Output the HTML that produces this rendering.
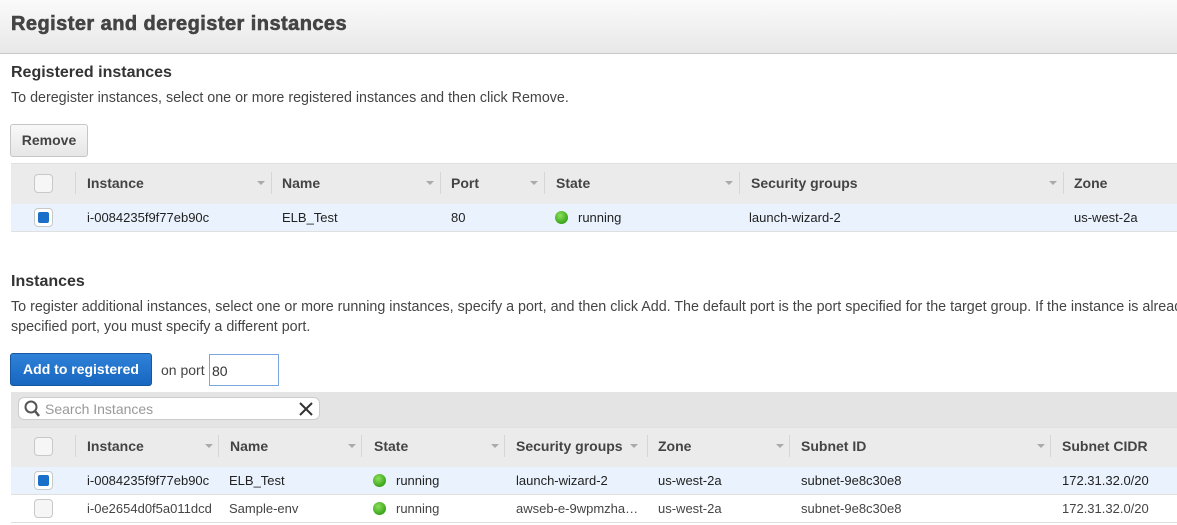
<!DOCTYPE html>
<html><head><style>
body{margin:0;width:1177px;height:525px;overflow:hidden;background:#fff;font-family:"Liberation Sans",Arial,sans-serif;color:#333;position:relative}
.a{position:absolute;white-space:nowrap}
.title{left:0;top:0;width:1177px;height:53px;background:linear-gradient(#fafafa,#e8e8e8);border-bottom:1px solid #c8c8c8}
h3{margin:0;font-size:16px;font-weight:bold;color:#333}
.d{font-size:14.3px;color:#444}
.hdr{background:#ebebeb;border-top:1px solid #e0e0e0;border-bottom:1px solid #d0d0d0}
.row{border-bottom:1px solid #e0e0e0}
.sel{background:#eaf3fd}
.th{font-size:14px;font-weight:bold;color:#444}
.td{font-size:13px;color:#222}
.div{width:1px;height:22px;background:#d6d6d6}
.ar{width:0;height:0;border-left:4px solid transparent;border-right:4px solid transparent;border-top:4px solid #aaa}
.cb{width:17px;height:17px;border:1px solid #c8c8c8;border-radius:4px;background:#f6f6f6}
.cbs{width:17px;height:17px;border:1px solid #c8c8c8;border-radius:4px;background:#fff}
.cbs::after{content:"";position:absolute;left:3px;top:3px;width:11px;height:11px;background:#1a6fc9;border-radius:2px}
.dot{width:13px;height:13px;border-radius:50%;background:radial-gradient(circle at 40% 35%,#8de05a,#3aa51c 70%,#2a8a12)}
</style></head><body>
<div class="a title"></div>
<div class="a" style="left:11px;top:13px;font-size:20px;color:#444;letter-spacing:0.45px"><b style="font-weight:bold;-webkit-text-stroke:0.6px #444">Register and deregister instances</b></div>
<div class="a" style="left:11px;top:64px"><h3>Registered instances</h3></div>
<div class="a d" style="left:11px;top:90px">To deregister instances, select one or more registered instances and then click Remove.</div>
<div class="a" style="left:10px;top:124px;width:76px;height:31px;border:1px solid #c6c6c6;border-radius:3px;background:linear-gradient(#f8f8f8,#e6e6e6);font-size:14px;font-weight:bold;color:#444;text-align:center;line-height:31px">Remove</div>

<div class="a hdr" style="left:11px;top:163px;width:1166px;height:40px"></div>
<div class="a cb" style="left:34px;top:174px"></div>
<div class="a div" style="left:75px;top:172px"></div><div class="a th" style="left:87px;top:175px">Instance</div><div class="a ar" style="left:257px;top:181px"></div>
<div class="a div" style="left:271px;top:172px"></div><div class="a th" style="left:282px;top:175px">Name</div><div class="a ar" style="left:426px;top:181px"></div>
<div class="a div" style="left:440px;top:172px"></div><div class="a th" style="left:451px;top:175px">Port</div><div class="a ar" style="left:530px;top:181px"></div>
<div class="a div" style="left:544px;top:172px"></div><div class="a th" style="left:556px;top:175px">State</div><div class="a ar" style="left:725px;top:181px"></div>
<div class="a div" style="left:739px;top:172px"></div><div class="a th" style="left:751px;top:175px">Security groups</div><div class="a ar" style="left:1049px;top:181px"></div>
<div class="a div" style="left:1063px;top:172px"></div><div class="a th" style="left:1074px;top:175px">Zone</div>
<div class="a row sel" style="left:11px;top:204px;width:1166px;height:27px"></div>
<div class="a cbs" style="left:34px;top:208px"></div>
<div class="a td" style="left:87px;top:210px">i-0084235f9f77eb90c</div>
<div class="a td" style="left:282px;top:210px">ELB_Test</div>
<div class="a td" style="left:451px;top:210px">80</div>
<div class="a dot" style="left:555px;top:211px"></div><div class="a td" style="left:578px;top:210px">running</div>
<div class="a td" style="left:749px;top:210px">launch-wizard-2</div>
<div class="a td" style="left:1074px;top:210px">us-west-2a</div>

<div class="a" style="left:11px;top:273px"><h3>Instances</h3></div>
<div class="a d" style="left:11px;top:299px;width:1166px;overflow:hidden">To register additional instances, select one or more running instances, specify a port, and then click Add. The default port is the port specified for the target group. If the instance is already registered on the</div>
<div class="a d" style="left:11px;top:319px">specified port, you must specify a different port.</div>
<div class="a" style="left:10px;top:353px;width:142px;height:33px;border-radius:3px;background:linear-gradient(#2f82d8,#1766c0);border:1px solid #15589f;box-sizing:border-box;color:#fff;font-size:14px;font-weight:bold;text-align:center;line-height:31px">Add to registered</div>
<div class="a" style="left:161px;top:362px;font-size:14px;color:#444">on port</div>
<div class="a" style="left:209px;top:354px;width:70px;height:32px;border:1px solid #7aa7e0;box-sizing:border-box;font-size:14px;padding:8px 0 0 2px;color:#333">80</div>

<div class="a" style="left:11px;top:392px;width:1166px;height:35px;background:#e4e4e4"></div>
<div class="a" style="left:18px;top:397px;width:302px;height:23px;background:#fff;border:1px solid #ccc;border-radius:6px;box-sizing:border-box"></div>
<svg class="a" style="left:23px;top:400px" width="20" height="18"><circle cx="8" cy="7" r="5.5" fill="none" stroke="#555" stroke-width="2"/><line x1="12" y1="11" x2="16" y2="16" stroke="#555" stroke-width="2.5"/></svg>
<div class="a" style="left:45px;top:401px;font-size:14px;color:#999">Search Instances</div>
<svg class="a" style="left:299px;top:402px" width="14" height="14"><path d="M1 1L13 13M13 1L1 13" stroke="#333" stroke-width="2"/></svg>

<div class="a hdr" style="left:11px;top:427px;width:1166px;height:39px"></div>
<div class="a cb" style="left:34px;top:437px"></div>
<div class="a div" style="left:75px;top:435px"></div><div class="a th" style="left:87px;top:438px">Instance</div><div class="a ar" style="left:205px;top:444px"></div>
<div class="a div" style="left:218px;top:435px"></div><div class="a th" style="left:230px;top:438px">Name</div><div class="a ar" style="left:348px;top:444px"></div>
<div class="a div" style="left:361px;top:435px"></div><div class="a th" style="left:374px;top:438px">State</div><div class="a ar" style="left:491px;top:444px"></div>
<div class="a div" style="left:504px;top:435px"></div><div class="a th" style="left:516px;top:438px">Security groups</div><div class="a ar" style="left:630px;top:444px"></div>
<div class="a div" style="left:647px;top:435px"></div><div class="a th" style="left:658px;top:438px">Zone</div><div class="a ar" style="left:776px;top:444px"></div>
<div class="a div" style="left:789px;top:435px"></div><div class="a th" style="left:801px;top:438px">Subnet ID</div><div class="a ar" style="left:1037px;top:444px"></div>
<div class="a div" style="left:1050px;top:435px"></div><div class="a th" style="left:1062px;top:438px">Subnet CIDR</div>
<div class="a row sel" style="left:11px;top:467px;width:1166px;height:27px"></div>
<div class="a cbs" style="left:34px;top:471px"></div>
<div class="a td" style="left:87px;top:473px">i-0084235f9f77eb90c</div>
<div class="a td" style="left:229px;top:473px">ELB_Test</div>
<div class="a dot" style="left:373px;top:474px"></div><div class="a td" style="left:396px;top:473px">running</div>
<div class="a td" style="left:516px;top:473px">launch-wizard-2</div>
<div class="a td" style="left:658px;top:473px">us-west-2a</div>
<div class="a td" style="left:801px;top:473px">subnet-9e8c30e8</div>
<div class="a td" style="left:1062px;top:473px">172.31.32.0/20</div>
<div class="a row" style="left:11px;top:495px;width:1166px;height:27px"></div>
<div class="a cb" style="left:34px;top:499px"></div>
<div class="a td" style="left:87px;top:501px;color:#444">i-0e2654d0f5a011dcd</div>
<div class="a td" style="left:229px;top:501px;color:#444">Sample-env</div>
<div class="a dot" style="left:373px;top:502px"></div><div class="a td" style="left:396px;top:501px;color:#444">running</div>
<div class="a td" style="left:516px;top:501px;color:#444">awseb-e-9wpmzha…</div>
<div class="a td" style="left:658px;top:501px;color:#444">us-west-2a</div>
<div class="a td" style="left:801px;top:501px;color:#444">subnet-9e8c30e8</div>
<div class="a td" style="left:1062px;top:501px;color:#444">172.31.32.0/20</div>
</body></html>
